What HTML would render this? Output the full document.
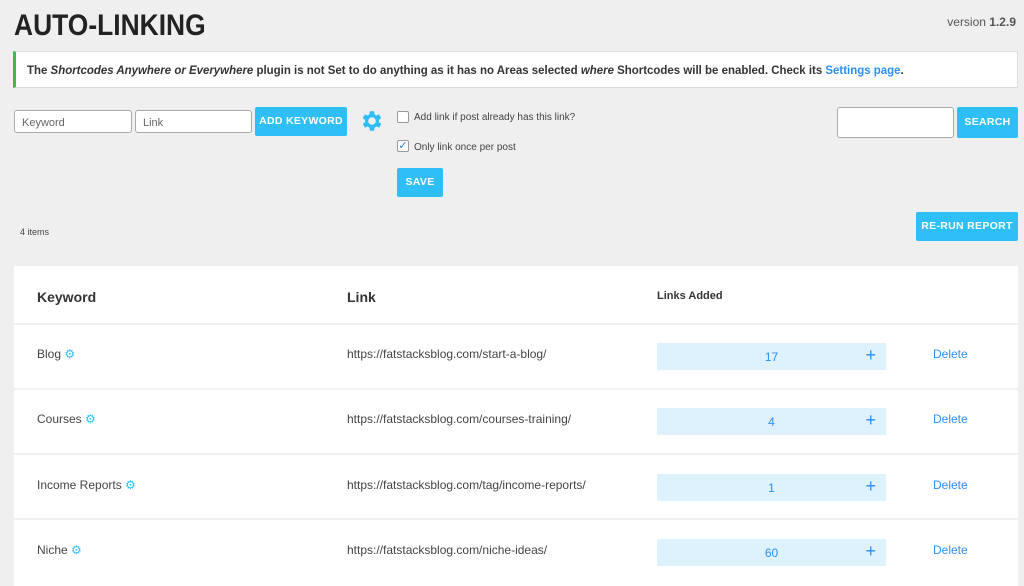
<!DOCTYPE html>
<html><head><style>
*{box-sizing:border-box;margin:0;padding:0}
body{width:1024px;height:578px;overflow:hidden;background:#efefef;font-family:"Liberation Sans",sans-serif;color:#333;position:relative}
.a{position:absolute}
h1{position:absolute;left:14px;top:9px;font-size:30px;font-weight:bold;color:#222;transform:scaleX(0.88);transform-origin:left top}
.ver{right:8px;top:15px;font-size:12px;color:#555}
.notice{left:13px;top:51px;width:1005px;height:37px;background:#fff;border:1px solid #ddd;border-left:3px solid #46b450;font-size:12px;font-weight:bold;color:#333;padding:11px 0 0 11px;white-space:nowrap}
.notice div{transform:scaleX(0.955);transform-origin:left top}
.notice a{color:#2a8ff7;text-decoration:none}
.inp{background:#fff;border:1px solid #aaa;border-radius:3px;font-size:11px;color:#666;padding:6px 7px}
.btn{background:#2ebff7;color:#fff;font-weight:bold;font-size:10.5px;text-align:center;border-radius:2px;letter-spacing:0.3px}
.cb{width:12px;height:12px;border:1px solid #999;border-radius:2px;background:#fff}
.lbl{font-size:10px;color:#444}
.table{left:14px;top:266px;width:1004px;height:320px;background:#fff}
.hd{font-size:14px;font-weight:bold;color:#333}
.line{left:14px;width:1004px;height:2px;background:#f1f1f1}
.cell{font-size:12px;color:#444}
.bar{left:657px;width:229px;height:27px;background:#ddf2fd;color:#2a8ff7;font-size:12px}
.bar span{position:absolute;left:0;width:229px;text-align:center;top:7px}
.bar b{position:absolute;right:10px;top:2px;font-size:18px;font-weight:normal;color:#2a8ff7}
.del{left:933px;font-size:12px;color:#2a8ff7}
</style></head><body>
<h1>AUTO-LINKING</h1>
<div class="a ver">version <b>1.2.9</b></div>
<div class="a notice"><div>The <i>Shortcodes Anywhere or Everywhere</i> plugin is not Set to do anything as it has no Areas selected <i>where</i> Shortcodes will be enabled. Check its <a>Settings page</a>.</div></div>
<div class="a inp" style="left:14px;top:110px;width:118px;height:23px">Keyword</div>
<div class="a inp" style="left:135px;top:110px;width:117px;height:23px">Link</div>
<div class="a btn" style="left:255px;top:107px;width:92px;height:29px;line-height:29px">ADD KEYWORD</div>
<svg class="a" style="left:359px;top:108px" width="26" height="26" viewBox="0 0 24 24"><path fill="#2ebff7" d="M19.4 13a7.5 7.5 0 0 0 0-2l2.1-1.6-2-3.5-2.5 1a7 7 0 0 0-1.7-1L15 3h-4l-.4 2.9a7 7 0 0 0-1.7 1l-2.5-1-2 3.5L6.6 11a7.5 7.5 0 0 0 0 2l-2.1 1.6 2 3.5 2.5-1a7 7 0 0 0 1.7 1L11 21h4l.4-2.9a7 7 0 0 0 1.7-1l2.5 1 2-3.5zM13 15.5a3.5 3.5 0 1 1 0-7 3.5 3.5 0 0 1 0 7z" transform="translate(-1 0)"/></svg>
<div class="a cb" style="left:397px;top:111px"></div>
<div class="a lbl" style="left:414px;top:112px">Add link if post already has this link?</div>
<div class="a cb" style="left:397px;top:140px;color:#2a7fd4;font-size:11px;line-height:10px;text-align:center">✓</div>
<div class="a lbl" style="left:414px;top:142px">Only link once per post</div>
<div class="a btn" style="left:397px;top:168px;width:46px;height:29px;line-height:29px">SAVE</div>
<div class="a inp" style="left:837px;top:107px;width:117px;height:31px"></div>
<div class="a btn" style="left:957px;top:107px;width:61px;height:31px;line-height:31px">SEARCH</div>
<div class="a" style="left:20px;top:227px;font-size:9px;color:#444">4 items</div>
<div class="a btn" style="left:916px;top:212px;width:102px;height:29px;line-height:29px">RE-RUN REPORT</div>
<div class="a table"></div>
<div class="a hd" style="left:37px;top:289px">Keyword</div>
<div class="a hd" style="left:347px;top:289px">Link</div>
<div class="a hd" style="left:657px;top:290px;font-size:11px">Links Added</div>
<div class="a line" style="top:323px"></div>
<div class="a line" style="top:388px"></div>
<div class="a line" style="top:453px"></div>
<div class="a line" style="top:518px"></div>

<div class="a cell" style="left:37px;top:347px">Blog <span style="color:#2ebff7">⚙</span></div>
<div class="a cell" style="left:347px;top:347px">https://fatstacksblog.com/start-a-blog/</div>
<div class="a bar" style="top:343px"><span>17</span><b>+</b></div>
<div class="a del" style="top:347px">Delete</div>

<div class="a cell" style="left:37px;top:412px">Courses <span style="color:#2ebff7">⚙</span></div>
<div class="a cell" style="left:347px;top:412px">https://fatstacksblog.com/courses-training/</div>
<div class="a bar" style="top:408px"><span>4</span><b>+</b></div>
<div class="a del" style="top:412px">Delete</div>

<div class="a cell" style="left:37px;top:478px">Income Reports <span style="color:#2ebff7">⚙</span></div>
<div class="a cell" style="left:347px;top:478px">https://fatstacksblog.com/tag/income-reports/</div>
<div class="a bar" style="top:474px"><span>1</span><b>+</b></div>
<div class="a del" style="top:478px">Delete</div>

<div class="a cell" style="left:37px;top:543px">Niche <span style="color:#2ebff7">⚙</span></div>
<div class="a cell" style="left:347px;top:543px">https://fatstacksblog.com/niche-ideas/</div>
<div class="a bar" style="top:539px"><span>60</span><b>+</b></div>
<div class="a del" style="top:543px">Delete</div>
</body></html>
